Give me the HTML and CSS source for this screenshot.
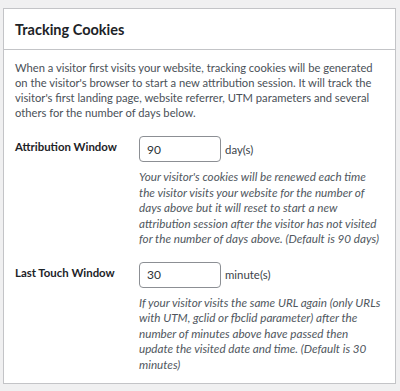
FILE: index.html
```html
<!DOCTYPE html>
<html>
<head>
<meta charset="utf-8">
<link rel="stylesheet" href="styles.css">
</head>
<body>
<div class="postbox">
  <div class="postbox-header"><h2>Tracking Cookies</h2></div>
  <div class="inside">
    <p class="intro">When a visitor first visits your website, tracking cookies will be generated on the visitor's browser to start a new attribution session. It will track the visitor's first landing page, website referrer, UTM parameters and several others for the number of days below.</p>
    <div class="row">
      <div class="label">Attribution Window</div>
      <div class="field">
        <div class="input-line"><span class="input">90</span><span class="unit">day(s)</span></div>
        <p class="description">Your visitor's cookies will be renewed each time the visitor visits your website for the number of days above but it will reset to start a new attribution session after the visitor has not visited for the number of days above. (Default is 90 days)</p>
      </div>
    </div>
    <div class="row">
      <div class="label">Last Touch Window</div>
      <div class="field">
        <div class="input-line"><span class="input">30</span><span class="unit">minute(s)</span></div>
        <p class="description">If your visitor visits the same URL again (only URLs with UTM, gclid or fbclid parameter) after the number of minutes above have passed then update the visited date and time. (Default is 30 minutes)</p>
      </div>
    </div>
  </div>
</div>
</body>
</html>
```
FILE: styles.css
```css
html, body { margin: 0; padding: 0; }
body {
  background: #f0f0f1;
  font-family: Lato, "Noto Sans", sans-serif;
  font-size: 11.2px;
  color: #3c434a;
  width: 400px;
  height: 391px;
  overflow: hidden;
}
.postbox {
  margin: 8px 0 0 3px;
  width: 393px;
  box-sizing: border-box;
  background: #fff;
  border: 1px solid #c3c4c7;
  height: 376px;
}
.postbox-header {
  height: 40px;
  border-bottom: 1px solid #c3c4c7;
  display: flex;
  align-items: center;
  padding-left: 11px;
}
.postbox-header h2 {
  margin: 0;
  font-size: 14.5px;
  font-weight: 700;
  color: #1d2327;
}
.inside { padding: 10px 11px 0 11px; }
.intro {
  margin: 0;
  line-height: 15px;
  color: #4a5158;
}
.row {
  display: flex;
  margin-top: 16px;
}
.row + .row { margin-top: 15px; }
.label {
  width: 124px;
  flex: none;
  font-weight: 700;
  font-size: 11.4px;
  line-height: 15px;
  color: #1d2327;
  padding-top: 3px;
}
.field { flex: 1; }
.input-line { display: flex; align-items: center; }
.input {
  box-sizing: border-box;
  width: 82px;
  height: 26px;
  border: 1px solid #8c8f94;
  border-radius: 4px;
  padding: 0 7px;
  display: flex;
  align-items: center;
  color: #2c3338;
  font-size: 12px;
}
.unit { margin-left: 4px; color: #3c434a; font-size: 11.4px; }
.description {
  margin: 7px 0 0 0;
  font-style: italic;
  font-size: 11.7px;
  color: #50575e;
  line-height: 15.5px;
}
```
